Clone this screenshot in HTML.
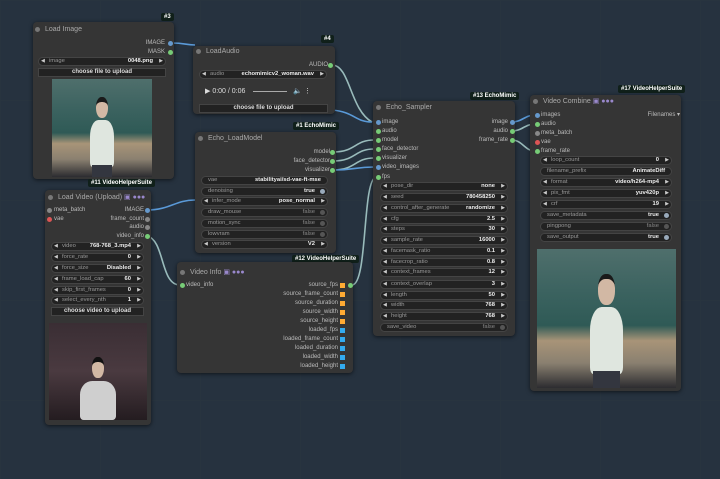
<!DOCTYPE html><html><head><style>
*{margin:0;padding:0;box-sizing:border-box}
body{width:720px;height:479px;overflow:hidden;background:#26323f;font-family:"Liberation Sans",sans-serif;position:relative;
background-image:linear-gradient(#28343f 1px,transparent 1px),linear-gradient(90deg,#28343f 1px,transparent 1px);background-size:100px 100px}
.n{position:absolute;background:#353535;border-radius:4px;box-shadow:0 1px 4px #0009}
.t{position:absolute;font-size:7px;color:#aaa;white-space:nowrap}
.t i{display:inline-block;width:5px;height:5px;border-radius:50%;background:#777;margin-right:5px;vertical-align:middle}
.b{position:absolute;background:#10201a;color:#fff;font-size:6px;font-weight:bold;padding:1px 3px;border-radius:2px;white-space:nowrap}
.s{position:absolute;font-size:6px;color:#bbb;white-space:nowrap;line-height:8px}
.s.r{text-align:right}
.d{position:absolute;width:5px;height:5px;border-radius:50%}
.g{background:#7c7}.bl{background:#69c}.gr{background:#888}.rd{background:#d55}
.w{position:absolute;height:9px;background:#222;border:1px solid #444;border-radius:5px;font-size:5.8px;color:#999;line-height:7px;padding:0 6px;white-space:nowrap}
.w b{position:absolute;right:12px;top:0;color:#eee;font-weight:bold}
.w.a:before{content:"◀";position:absolute;left:2px;color:#ccc;font-size:5px}
.w.a:after{content:"▶";position:absolute;right:2px;color:#ccc;font-size:5px}
.w.a{padding-left:10px}
.w.tg:after{content:"";position:absolute;right:2px;top:1px;width:5px;height:5px;border-radius:50%;background:#555}
.w.on:after{background:#9ab}
.btn{position:absolute;height:9px;background:#222;border:1px solid #444;font-size:6px;color:#ddd;text-align:center;line-height:7px;font-weight:bold}
.sq{position:absolute;width:5px;height:5px}
.img{position:absolute;background:linear-gradient(180deg,#4f6f6c 0%,#3c6360 30%,#2f5a56 55%,#a89478 66%,#8a8070 82%,#2c2c30 100%);overflow:hidden}
.img .p{position:absolute;left:38%;width:24%;top:42%;height:48%;background:#dfe6df;border-radius:35% 35% 10% 10%}
.img .k{position:absolute;left:40%;width:20%;top:88%;height:12%;background:#33363f}
.img .h{position:absolute;left:44%;width:12%;top:18%;height:22%;background:#d2b8a4;border-radius:45%;border-top:5px solid #1a1a1a}
</style></head><body>
<svg width="720" height="479" style="position:absolute;left:0;top:0" fill="none" stroke-width="1.6">
<path d="M172 43 C185 43,185 45,195 45" stroke="#5a9ad8"/>
<path d="M332 65 C350 65,350 110,372 122" stroke="#9bb"/>
<path d="M332 110 C355 112,355 122,372 122" stroke="#5a9ad8"/>
<path d="M334 152 C355 152,355 140,374 140" stroke="#9bb"/>
<path d="M334 161 C355 161,355 149,374 149" stroke="#9bb"/>
<path d="M334 170 C355 170,355 158,374 158" stroke="#9bb"/>
<path d="M334 170 C355 170,355 167,374 167" stroke="#5a9ad8"/>
<path d="M147 210 C170 210,175 200,195 200" stroke="#5a9ad8"/>
<path d="M147 236 C165 240,160 285,180 285" stroke="#9bb"/>
<path d="M352 285 C368 285,362 180,376 177" stroke="#9bb"/>
<path d="M512 122 C522 122,525 115,535 115" stroke="#5a9ad8"/>
<path d="M512 131 C522 131,525 124,535 124" stroke="#9bb"/>
<path d="M512 140 C522 140,525 151,535 151" stroke="#9bb"/>
</svg>

<div class="b" style="left:161px;top:13px">#3</div>
<div class="n" style="left:33px;top:22px;width:141px;height:157px"></div>
<div class="t" style="left:35px;top:26px"><i></i>Load Image</div>
<div class="s r" style="right:555px;top:39px">IMAGE</div><div class="d bl" style="left:168px;top:41px"></div>
<div class="s r" style="right:555px;top:48px">MASK</div><div class="d g" style="left:168px;top:50px"></div>
<div class="w a" style="left:38px;top:57px;width:128px">image<b>0048.png</b></div>
<div class="btn" style="left:38px;top:68px;width:128px">choose file to upload</div>
<div class="img" style="left:52px;top:79px;width:100px;height:98px"><div class="p"></div><div class="k"></div><div class="h"></div></div>

<div class="b" style="left:321px;top:35px">#4</div>
<div class="n" style="left:193px;top:46px;width:142px;height:68px"></div>
<div class="t" style="left:196px;top:48px"><i></i>LoadAudio</div>
<div class="s r" style="right:392px;top:61px">AUDIO</div><div class="d g" style="left:328px;top:63px"></div>
<div class="w a" style="left:199px;top:70px;width:128px">audio<b>echomimicv2_woman.wav</b></div>
<div class="s" style="left:205px;top:88px;font-size:7px;color:#ddd">▶ 0:00 / 0:06 <span style="display:inline-block;width:34px;height:1px;background:#aaa;vertical-align:middle;margin:0 6px"></span>🔈 ⋮</div>
<div class="btn" style="left:199px;top:104px;width:129px">choose file to upload</div>

<div class="b" style="left:293px;top:122px">#1 EchoMimic</div>
<div class="n" style="left:195px;top:132px;width:141px;height:121px"></div>
<div class="t" style="left:198px;top:135px"><i></i>Echo_LoadModel</div>
<div class="s r" style="right:390px;top:148px">model</div><div class="d g" style="left:330px;top:150px"></div>
<div class="s r" style="right:390px;top:157px">face_detector</div><div class="d g" style="left:330px;top:159px"></div>
<div class="s r" style="right:390px;top:166px">visualizer</div><div class="d g" style="left:330px;top:168px"></div>
<div class="w" style="left:201px;top:176px;width:127px">vae<b style="right:6px">stabilityai/sd-vae-ft-mse</b></div>
<div class="w tg on" style="left:201px;top:187px;width:127px">denoising<b>true</b></div>
<div class="w a" style="left:201px;top:197px;width:127px">infer_mode<b>pose_normal</b></div>
<div class="w tg" style="left:201px;top:208px;width:127px">draw_mouse<b style="color:#888;font-weight:normal">false</b></div>
<div class="w tg" style="left:201px;top:219px;width:127px">motion_sync<b style="color:#888;font-weight:normal">false</b></div>
<div class="w tg" style="left:201px;top:230px;width:127px">lowvram<b style="color:#888;font-weight:normal">false</b></div>
<div class="w a" style="left:201px;top:240px;width:127px">version<b>V2</b></div>

<div class="b" style="left:88px;top:179px">#11 VideoHelperSuite</div>
<div class="n" style="left:45px;top:190px;width:106px;height:235px"></div>
<div class="t" style="left:48px;top:193px"><i></i>Load Video (Upload) <span style="color:#98c">▣ ●●●</span></div>
<div class="d gr" style="left:47px;top:208px"></div><div class="s" style="left:54px;top:206px">meta_batch</div>
<div class="d rd" style="left:47px;top:217px"></div><div class="s" style="left:54px;top:215px">vae</div>
<div class="s r" style="right:576px;top:206px">IMAGE</div><div class="d bl" style="left:145px;top:208px"></div>
<div class="s r" style="right:576px;top:215px">frame_count</div><div class="d gr" style="left:145px;top:217px"></div>
<div class="s r" style="right:576px;top:223px">audio</div><div class="d gr" style="left:145px;top:225px"></div>
<div class="s r" style="right:576px;top:232px">video_info</div><div class="d g" style="left:145px;top:234px"></div>
<div class="w a" style="left:51px;top:242px;width:93px">video<b>768-768_3.mp4</b></div>
<div class="w a" style="left:51px;top:253px;width:93px">force_rate<b>0</b></div>
<div class="w a" style="left:51px;top:264px;width:93px">force_size<b>Disabled</b></div>
<div class="w a" style="left:51px;top:275px;width:93px">frame_load_cap<b>60</b></div>
<div class="w a" style="left:51px;top:286px;width:93px">skip_first_frames<b>0</b></div>
<div class="w a" style="left:51px;top:296px;width:93px">select_every_nth<b>1</b></div>
<div class="btn" style="left:51px;top:307px;width:93px">choose video to upload</div>
<div class="img" style="left:49px;top:323px;width:98px;height:97px;background:linear-gradient(180deg,#3a2e34,#4a3a40 50%,#241c20)"><div class="p" style="background:#cfcfcf;top:60%;height:40%;left:32%;width:36%"></div><div class="h" style="top:35%;border-top-color:#111"></div></div>

<div class="b" style="left:292px;top:255px">#12 VideoHelperSuite</div>
<div class="n" style="left:177px;top:262px;width:176px;height:111px"></div>
<div class="t" style="left:180px;top:268px"><i></i>Video Info <span style="color:#98c">▣ ●●●</span></div>
<div class="d g" style="left:180px;top:283px"></div><div class="s" style="left:186px;top:281px">video_info</div>
<div class="s r" style="right:382px;top:281px">source_fps</div><div class="sq" style="left:340px;top:283px;background:#fa3"></div><div class="d g" style="left:348px;top:283px"></div>
<div class="s r" style="right:382px;top:290px">source_frame_count</div><div class="sq" style="left:340px;top:292px;background:#fa3"></div>
<div class="s r" style="right:382px;top:299px">source_duration</div><div class="sq" style="left:340px;top:301px;background:#fa3"></div>
<div class="s r" style="right:382px;top:308px">source_width</div><div class="sq" style="left:340px;top:310px;background:#fa3"></div>
<div class="s r" style="right:382px;top:317px">source_height</div><div class="sq" style="left:340px;top:319px;background:#fa3"></div>
<div class="s r" style="right:382px;top:326px">loaded_fps</div><div class="sq" style="left:340px;top:328px;background:#3ae"></div>
<div class="s r" style="right:382px;top:335px">loaded_frame_count</div><div class="sq" style="left:340px;top:337px;background:#3ae"></div>
<div class="s r" style="right:382px;top:344px">loaded_duration</div><div class="sq" style="left:340px;top:346px;background:#3ae"></div>
<div class="s r" style="right:382px;top:353px">loaded_width</div><div class="sq" style="left:340px;top:355px;background:#3ae"></div>
<div class="s r" style="right:382px;top:362px">loaded_height</div><div class="sq" style="left:340px;top:364px;background:#3ae"></div>

<div class="b" style="left:470px;top:92px">#13 EchoMimic</div>
<div class="n" style="left:373px;top:101px;width:142px;height:235px"></div>
<div class="t" style="left:376px;top:104px"><i></i>Echo_Sampler</div>
<div class="d bl" style="left:376px;top:120px"></div><div class="s" style="left:382px;top:118px">image</div>
<div class="d g" style="left:376px;top:129px"></div><div class="s" style="left:382px;top:127px">audio</div>
<div class="d g" style="left:376px;top:138px"></div><div class="s" style="left:382px;top:136px">model</div>
<div class="d g" style="left:376px;top:147px"></div><div class="s" style="left:382px;top:145px">face_detector</div>
<div class="d g" style="left:376px;top:156px"></div><div class="s" style="left:382px;top:154px">visualizer</div>
<div class="d bl" style="left:376px;top:165px"></div><div class="s" style="left:382px;top:163px">video_images</div>
<div class="d g" style="left:376px;top:175px"></div><div class="s" style="left:382px;top:173px">fps</div>
<div class="s r" style="right:212px;top:118px">image</div><div class="d bl" style="left:510px;top:120px"></div>
<div class="s r" style="right:212px;top:127px">audio</div><div class="d g" style="left:510px;top:129px"></div>
<div class="s r" style="right:212px;top:136px">frame_rate</div><div class="d g" style="left:510px;top:138px"></div>
<div class="w a" style="left:380px;top:182px;width:128px">pose_dir<b>none</b></div>
<div class="w a" style="left:380px;top:193px;width:128px">seed<b>780458250</b></div>
<div class="w a" style="left:380px;top:204px;width:128px">control_after_generate<b>randomize</b></div>
<div class="w a" style="left:380px;top:215px;width:128px">cfg<b>2.5</b></div>
<div class="w a" style="left:380px;top:225px;width:128px">steps<b>30</b></div>
<div class="w a" style="left:380px;top:236px;width:128px">sample_rate<b>16000</b></div>
<div class="w a" style="left:380px;top:247px;width:128px">facemask_ratio<b>0.1</b></div>
<div class="w a" style="left:380px;top:258px;width:128px">facecrop_ratio<b>0.8</b></div>
<div class="w a" style="left:380px;top:268px;width:128px">context_frames<b>12</b></div>
<div class="w a" style="left:380px;top:280px;width:128px">context_overlap<b>3</b></div>
<div class="w a" style="left:380px;top:291px;width:128px">length<b>50</b></div>
<div class="w a" style="left:380px;top:301px;width:128px">width<b>768</b></div>
<div class="w a" style="left:380px;top:312px;width:128px">height<b>768</b></div>
<div class="w tg" style="left:380px;top:323px;width:128px">save_video<b style="color:#888;font-weight:normal">false</b></div>

<div class="b" style="left:618px;top:85px">#17 VideoHelperSuite</div>
<div class="n" style="left:530px;top:95px;width:151px;height:296px"></div>
<div class="t" style="left:533px;top:97px"><i></i>Video Combine <span style="color:#98c">▣ ●●●</span></div>
<div class="s r" style="right:40px;top:111px">Filenames ▾</div>
<div class="d bl" style="left:535px;top:113px"></div><div class="s" style="left:541px;top:111px">images</div>
<div class="d g" style="left:535px;top:122px"></div><div class="s" style="left:541px;top:120px">audio</div>
<div class="d gr" style="left:535px;top:131px"></div><div class="s" style="left:541px;top:129px">meta_batch</div>
<div class="d rd" style="left:535px;top:140px"></div><div class="s" style="left:541px;top:138px">vae</div>
<div class="d g" style="left:535px;top:149px"></div><div class="s" style="left:541px;top:147px">frame_rate</div>
<div class="w a" style="left:540px;top:156px;width:132px">loop_count<b>0</b></div>
<div class="w" style="left:540px;top:167px;width:132px">filename_prefix<b style="right:6px">AnimateDiff</b></div>
<div class="w a" style="left:540px;top:178px;width:132px">format<b>video/h264-mp4</b></div>
<div class="w a" style="left:540px;top:189px;width:132px">pix_fmt<b>yuv420p</b></div>
<div class="w a" style="left:540px;top:200px;width:132px">crf<b>19</b></div>
<div class="w tg on" style="left:540px;top:211px;width:132px">save_metadata<b>true</b></div>
<div class="w tg" style="left:540px;top:222px;width:132px">pingpong<b style="color:#888;font-weight:normal">false</b></div>
<div class="w tg on" style="left:540px;top:233px;width:132px">save_output<b>true</b></div>
<div class="img" style="left:537px;top:249px;width:139px;height:139px"><div class="p"></div><div class="k"></div><div class="h"></div></div>
</body></html>
